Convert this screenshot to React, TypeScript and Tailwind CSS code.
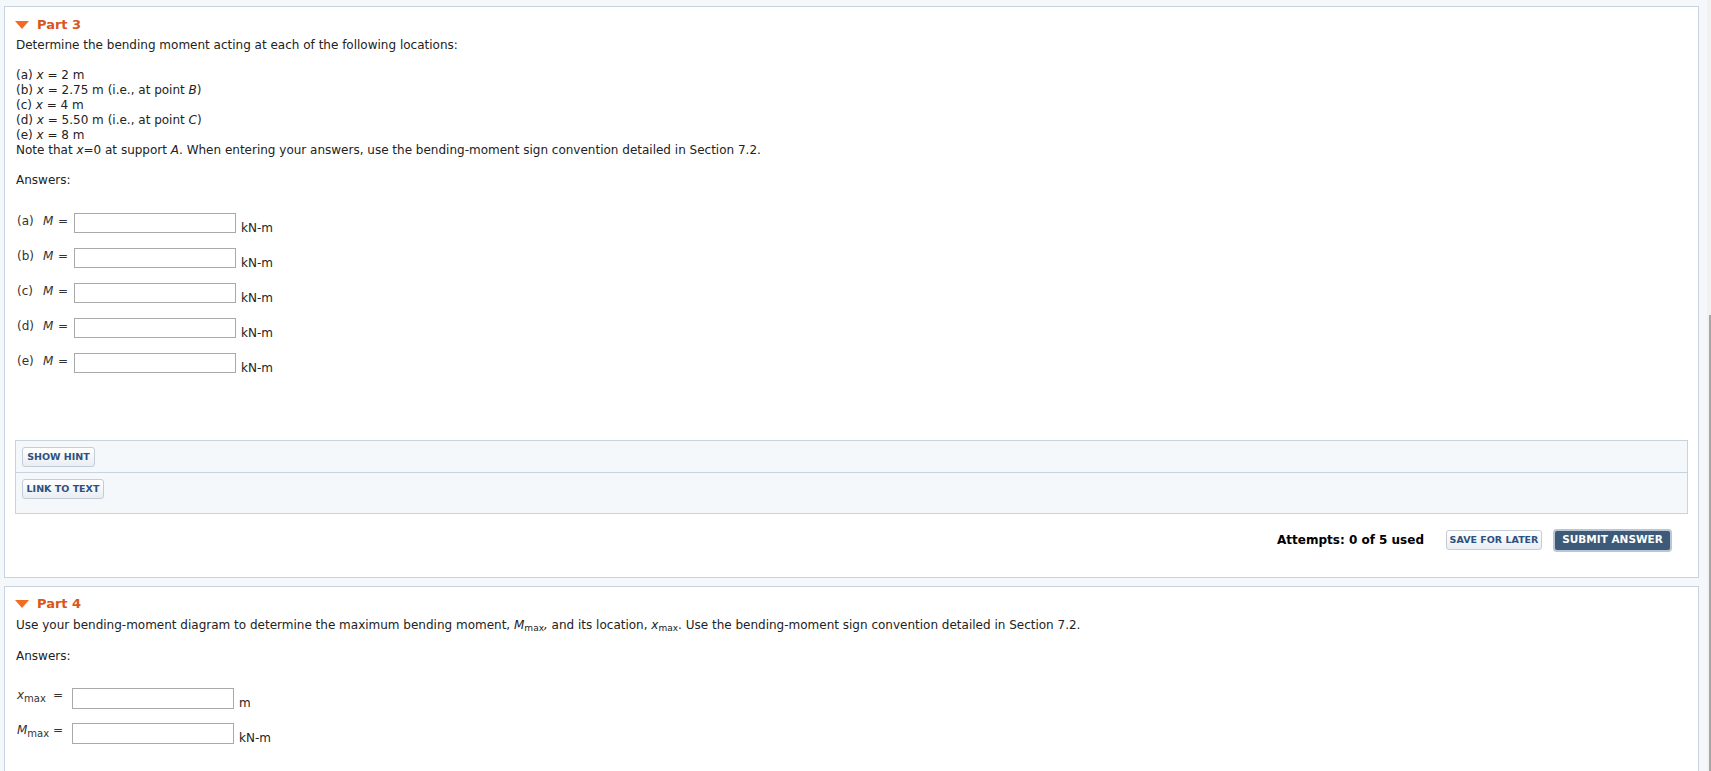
import React from "react"

const font = { fontFamily: '"DejaVu Sans", Verdana, sans-serif' }

function Caret() {
    return (
        <svg width="14" height="8" viewBox="0 0 14 8" className="shrink-0">
            <polygon points="0,0 14,0 7,8" fill="#f26b21" />
        </svg>
    )
}

function PartHeading({ label }: { label: string }) {
    return (
        <div className="flex h-[18px] items-center gap-[8px]">
            <Caret />
            <span className="text-[13px] font-bold text-[#d9561c]">{label}</span>
        </div>
    )
}

function LightButton({ children, className = "" }: { children: React.ReactNode; className?: string }) {
    return (
        <button
            className={`flex h-[20px] items-center justify-center whitespace-nowrap rounded-[3px] border border-[#c3ccd7] bg-gradient-to-b from-white to-[#e9eef3] text-[9.5px] font-bold text-[#2f5180] ${className}`}
        >
            {children}
        </button>
    )
}

function AnswerRow({ tag }: { tag: string }) {
    return (
        <div className="flex h-[35px] items-start pl-[2px]">
            <div className="flex w-[57px] whitespace-nowrap pt-[1px] text-[12px] leading-[15px] text-[#333]">
                <span className="w-[26px]">({tag})</span>
                <i className="w-[15px]">M</i>
                <span>=</span>
            </div>
            <div className="h-[20px] w-[162px] border border-[#a9a9a9] bg-white" />
            <div className="ml-[5px] pt-[8px] text-[12px] leading-[15px] text-[#222]">kN-m</div>
        </div>
    )
}

function MaxRow({ name, unit }: { name: string; unit: string }) {
    return (
        <div className="flex h-[35px] items-start pl-[2px]">
            <div className="flex w-[55px] whitespace-nowrap text-[12px] leading-[15px] text-[#333]">
                <span className="w-[36px]">
                    <i>{name}</i>
                    <sub className="text-[10px]">max</sub>
                </span>
                <span>=</span>
            </div>
            <div className="h-[21px] w-[162px] border border-[#a9a9a9] bg-white" />
            <div className="ml-[5px] pt-[8px] text-[12px] leading-[15px]">{unit}</div>
        </div>
    )
}

export default function App() {
    return (
        <div className="flex h-[771px] w-[1711px] overflow-hidden bg-[#f5f8fb] text-[#222]" style={font}>
            <div className="flex-1 pl-[4px] pt-[6px]">
                {/* Part 3 */}
                <div className="w-[1695px] border border-[#c9d3df] bg-white px-[10px] pt-[9px] pb-[25px]">
                    <PartHeading label="Part 3" />
                    <div className="mt-[4px] pl-[1px] text-[12px] leading-[15px]">
                        <p>Determine the bending moment acting at each of the following locations:</p>
                        <p className="mt-[15px]">
                            (a) <i>x</i> = 2 m
                        </p>
                        <p>
                            (b) <i>x</i> = 2.75 m (i.e., at point <i>B</i>)
                        </p>
                        <p>
                            (c) <i>x</i> = 4 m
                        </p>
                        <p>
                            (d) <i>x</i> = 5.50 m (i.e., at point <i>C</i>)
                        </p>
                        <p>
                            (e) <i>x</i> = 8 m
                        </p>
                        <p>
                            Note that <i>x</i>=0 at support <i>A</i>. When entering your answers, use the bending-moment
                            sign convention detailed in Section 7.2.
                        </p>
                        <p className="mt-[15px]">Answers:</p>
                    </div>

                    <div className="mt-[25px]">
                        {["a", "b", "c", "d", "e"].map((t) => (
                            <AnswerRow key={t} tag={t} />
                        ))}
                    </div>

                    <div className="mt-[52px] border border-[#c9d3df] bg-[#f5f8fb]">
                        <div className="border-b border-[#c9d3df] px-[6px] pt-[6px] pb-[5px]">
                            <LightButton className="w-[73px]">SHOW HINT</LightButton>
                        </div>
                        <div className="px-[6px] pt-[6px] pb-[14px]">
                            <LightButton className="w-[82px]">LINK TO TEXT</LightButton>
                        </div>
                    </div>

                    <div className="mt-[14px] mr-[16px] flex h-[24px] items-center justify-end">
                        <span className="text-[12px] font-bold text-black">Attempts: 0 of 5 used</span>
                        <LightButton className="ml-[22px] h-[19px] w-[96px]">SAVE FOR LATER</LightButton>
                        <button className="ml-[11px] flex h-[23px] w-[119px] items-center justify-center whitespace-nowrap rounded-[4px] border-2 border-[#b8c6d6] bg-[#3d5a78] text-[10.5px] font-bold text-white">
                            SUBMIT ANSWER
                        </button>
                    </div>
                </div>

                {/* Part 4 */}
                <div className="mt-[8px] h-[300px] w-[1695px] border border-[#c9d3df] bg-white px-[10px] pt-[8px]">
                    <PartHeading label="Part 4" />
                    <div className="mt-[5px] pl-[1px] text-[12px] leading-[15px]">
                        <p>
                            Use your bending-moment diagram to determine the maximum bending moment, <i>M</i>
                            <sub>max</sub>
                            <i>,</i> and its location, <i>x</i>
                            <sub>max</sub>. Use the bending-moment sign convention detailed in Section 7.2.
                        </p>
                        <p className="mt-[16px]">Answers:</p>
                    </div>

                    <div className="mt-[24px]">
                        <MaxRow name="x" unit="m" />
                        <MaxRow name="M" unit="kN-m" />
                    </div>
                </div>
            </div>

            {/* scrollbar edge */}
            <div className="flex w-[4px] flex-col bg-[#f1f1f1]">
                <div className="mt-[315px] ml-auto w-[2px] flex-1 bg-[#a6a6a6]" />
            </div>
        </div>
    )
}
